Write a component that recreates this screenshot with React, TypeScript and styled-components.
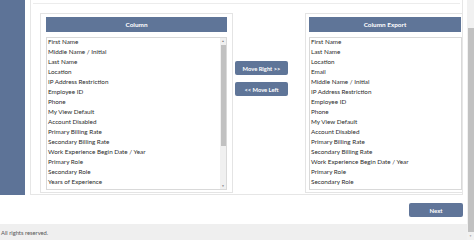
import styled, { createGlobalStyle } from "styled-components";

const GlobalStyle = createGlobalStyle`
  html, body {
    margin: 0;
    padding: 0;
    background: #ffffff;
    overflow: hidden;
  }
  body {
    font-family: Lato, "Open Sans", "Liberation Sans", sans-serif;
  }
`;

const leftColumns = [
  "First Name",
  "Middle Name / Initial",
  "Last Name",
  "Location",
  "IP Address Restriction",
  "Employee ID",
  "Phone",
  "My View Default",
  "Account Disabled",
  "Primary Billing Rate",
  "Secondary Billing Rate",
  "Work Experience Begin Date / Year",
  "Primary Role",
  "Secondary Role",
  "Years of Experience",
  "Title / Level",
];

const exportColumns = [
  "First Name",
  "Last Name",
  "Location",
  "Email",
  "Middle Name / Initial",
  "IP Address Restriction",
  "Employee ID",
  "Phone",
  "My View Default",
  "Account Disabled",
  "Primary Billing Rate",
  "Secondary Billing Rate",
  "Work Experience Begin Date / Year",
  "Primary Role",
  "Secondary Role",
  "Years of Experience",
];

export default function App() {
  return (
    <>
      <GlobalStyle />
      <Screen>
        <PageColumn>
          <MainRow>
            <Sidebar />
            <Card>
              <Divider />
              <Content>
                <Panel width={193} padLeft={5}>
                  <PanelHeader width={181}>Column</PanelHeader>
                  <ListBox width={181}>
                    <Items>
                      {leftColumns.map((c) => (
                        <Item key={c}>{c}</Item>
                      ))}
                    </Items>
                    <ListScroll>
                      <Arrow>▲</Arrow>
                      <ListTrack>
                        <ListThumb />
                      </ListTrack>
                      <Arrow>▼</Arrow>
                    </ListScroll>
                  </ListBox>
                </Panel>
                <Actions>
                  <ActionButton>Move Right &gt;&gt;</ActionButton>
                  <ActionButton>&lt;&lt; Move Left</ActionButton>
                </Actions>
                <Panel width={162} padLeft={3}>
                  <PanelHeader width={152}>Column Export</PanelHeader>
                  <ListBox width={153}>
                    <Items>
                      {exportColumns.map((c) => (
                        <Item key={c}>{c}</Item>
                      ))}
                    </Items>
                  </ListBox>
                </Panel>
              </Content>
            </Card>
          </MainRow>
          <NextRow>
            <NextButton>Next</NextButton>
          </NextRow>
          <Footer>All rights reserved.</Footer>
        </PageColumn>
        <PageScroll>
          <PageThumb />
          <PageArrow>▼</PageArrow>
        </PageScroll>
      </Screen>
    </>
  );
}

const Screen = styled.div`
  display: flex;
  width: 474px;
  height: 240px;
  overflow: hidden;
`;

const PageColumn = styled.div`
  width: 467px;
  display: flex;
  flex-direction: column;
`;

const MainRow = styled.div`
  display: flex;
  height: 195px;
`;

const Sidebar = styled.div`
  width: 25px;
  background: #5d7397;
`;

const Card = styled.div`
  margin-left: 5px;
  width: 433px;
  box-sizing: border-box;
  border: 1px solid #e6e6e6;
  border-top: none;
  overflow: hidden;
  padding-top: 3px;
`;

const Divider = styled.div`
  height: 1px;
  margin: 0 2px;
  background: #ececec;
`;

const Content = styled.div`
  display: flex;
  align-items: flex-start;
  padding-left: 9px;
  margin-top: 9px;
`;

const Panel = styled.div<{ width: number; padLeft: number }>`
  flex: none;
  width: ${(p) => p.width}px;
  height: 180px;
  box-sizing: border-box;
  border: 1px solid #e4e4e4;
  padding: 3px 0 0 ${(p) => p.padLeft}px;
  display: flex;
  flex-direction: column;
  gap: 5px;
`;

const PanelHeader = styled.div<{ width: number }>`
  width: ${(p) => p.width}px;
  height: 15px;
  background: #5f7598;
  color: #ffffff;
  font-size: 6.4px;
  font-weight: 700;
  display: flex;
  align-items: center;
  justify-content: center;
`;

const ListBox = styled.div<{ width: number }>`
  width: ${(p) => p.width}px;
  height: 153px;
  box-sizing: border-box;
  border: 1px solid #d9d9d9;
  display: flex;
  overflow: hidden;
`;

const Items = styled.div`
  flex: 1;
  overflow: hidden;
  padding-top: 0;
  margin-top: -1px;
`;

const Item = styled.div`
  height: 10px;
  line-height: 10px;
  padding-left: 1px;
  font-size: 6.3px;
  color: #2b2b2b;
  white-space: nowrap;
`;

const ListScroll = styled.div`
  width: 6px;
  background: #f0f0f0;
  display: flex;
  flex-direction: column;
`;

const Arrow = styled.div`
  height: 6px;
  font-size: 3px;
  color: #7a7a7a;
  display: flex;
  align-items: center;
  justify-content: center;
`;

const ListTrack = styled.div`
  flex: 1;
  padding-top: 1px;
`;

const ListThumb = styled.div`
  width: 5px;
  margin: 0 auto;
  height: 101px;
  background: #c1c1c1;
`;

const Actions = styled.div`
  flex: none;
  margin-left: 2px;
  margin-top: 48px;
  width: 53px;
  display: flex;
  flex-direction: column;
  gap: 7px;
  margin-right: 17px;
`;

const ActionButton = styled.div`
  height: 14px;
  border-radius: 2px;
  background: #5f7598;
  color: #ffffff;
  font-size: 5.8px;
  font-weight: 700;
  display: flex;
  align-items: center;
  justify-content: center;
  white-space: nowrap;
`;

const NextRow = styled.div`
  height: 29px;
  display: flex;
  justify-content: flex-end;
  align-items: flex-start;
  padding-right: 4px;
  padding-top: 8px;
  box-sizing: border-box;
`;

const NextButton = styled(ActionButton)`
  width: 54px;
  height: 14px;
  font-size: 6px;
  background: #607599;
`;

const Footer = styled.div`
  height: 16px;
  background: #efefef;
  color: #555555;
  font-size: 5.8px;
  display: flex;
  align-items: center;
  padding-left: 1px;
`;

const PageScroll = styled.div`
  width: 7px;
  background: #f1f1f1;
  display: flex;
  flex-direction: column;
  padding-top: 28px;
  box-sizing: border-box;
`;

const PageThumb = styled.div`
  margin-left: 1px;
  width: 6px;
  height: 204px;
  background: #c1c1c1;
`;

const PageArrow = styled.div`
  flex: 1;
  font-size: 3px;
  color: #a3a3a3;
  display: flex;
  align-items: center;
  justify-content: center;
`;
